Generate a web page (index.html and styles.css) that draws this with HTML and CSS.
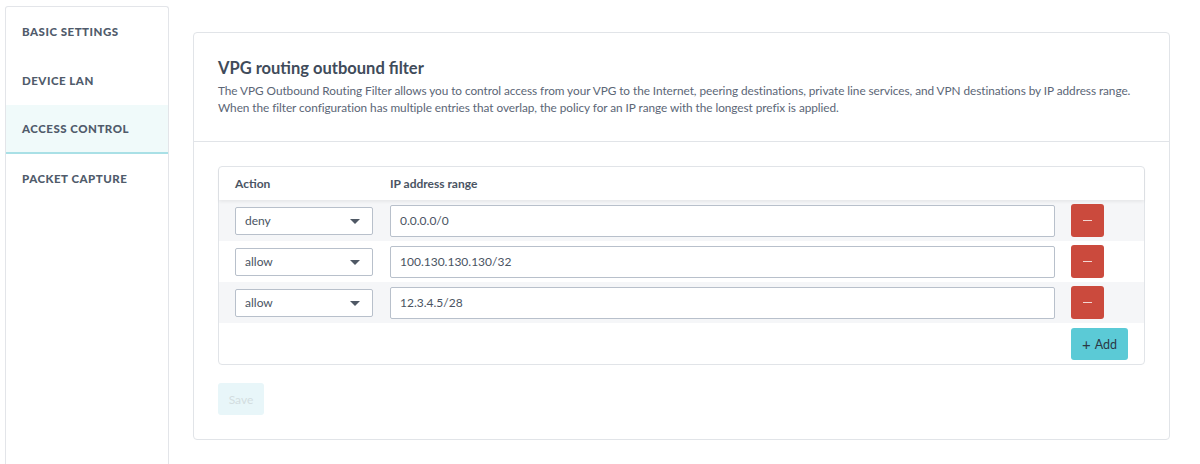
FILE: index.html
```html
<!DOCTYPE html>
<html>
<head>
    <title>Access Control</title>
    <link rel="stylesheet" href="styles.css">
</head>
<body>
    <div class="layout">
        <div class="sidebar">
            <div class="nav-item">BASIC SETTINGS</div>
            <div class="nav-item">DEVICE LAN</div>
            <div class="nav-item active">ACCESS CONTROL</div>
            <div class="nav-item">PACKET CAPTURE</div>
        </div>

        <div class="main">
            <div class="panel">
                <div class="panel-header">
                    <h2>VPG routing outbound filter</h2>
                    <p>The VPG Outbound Routing Filter allows you to control access from your VPG to the Internet, peering destinations, private line services, and VPN destinations by IP address range.<br>
                    When the filter configuration has multiple entries that overlap, the policy for an IP range with the longest prefix is applied.</p>
                </div>
                <div class="panel-body">
                    <div class="rules">
                        <div class="rule head">
                            <div class="col-action">Action</div>
                            <div class="col-range">IP address range</div>
                            <div class="col-btn"></div>
                        </div>
                        <div class="rule shaded">
                            <div class="col-action"><div class="select">deny<span class="caret"></span></div></div>
                            <div class="col-range"><div class="input">0.0.0.0/0</div></div>
                            <div class="col-btn"><button class="btn-remove"><span></span></button></div>
                        </div>
                        <div class="rule">
                            <div class="col-action"><div class="select">allow<span class="caret"></span></div></div>
                            <div class="col-range"><div class="input">100.130.130.130/32</div></div>
                            <div class="col-btn"><button class="btn-remove"><span></span></button></div>
                        </div>
                        <div class="rule shaded">
                            <div class="col-action"><div class="select">allow<span class="caret"></span></div></div>
                            <div class="col-range"><div class="input">12.3.4.5/28</div></div>
                            <div class="col-btn"><button class="btn-remove"><span></span></button></div>
                        </div>
                        <div class="rule foot">
                            <div class="col-action"></div>
                            <div class="col-range"></div>
                            <div class="col-btn"><button class="btn-add"><span class="plus">+</span>Add</button></div>
                        </div>
                    </div>
                    <button class="btn-save">Save</button>
                </div>
            </div>
        </div>
    </div>
</body>
</html>
```

FILE: styles.css
```css
* {
    margin: 0;
    padding: 0;
    box-sizing: border-box;
    font-family: Lato, "Open Sans", sans-serif;
}
body {
    background-color: #fff;
    color: #4a5463;
}
.layout {
    display: flex;
    height: 464px;
    padding: 6px 0 0 5px;
}
.sidebar {
    width: 164px;
    border: 1px solid #e3e5e9;
    border-bottom: none;
    border-radius: 3px 3px 0 0;
}
.nav-item {
    height: 49px;
    line-height: 49px;
    padding-left: 16px;
    font-size: 11.5px;
    font-weight: 900;
    letter-spacing: 0.5px;
    color: #505b6b;
}
.nav-item.active {
    background-color: #f0fafa;
    border-bottom: 2px solid #a9e0e6;
    line-height: 47px;
}
.main {
    flex: 1;
    padding: 26px 30px 0 24px;
}
.panel {
    border: 1px solid #e1e4e8;
    border-radius: 4px;
}
.panel-header {
    padding: 24px 24px 25px;
    border-bottom: 1px solid #e1e4e8;
}
.panel-header h2 {
    font-size: 16.5px;
    font-weight: 700;
    color: #404b5a;
    line-height: 22px;
    margin-bottom: 3px;
}
.panel-header p {
    font-size: 11.8px;
    letter-spacing: -0.05px;
    line-height: 17px;
    color: #5b6676;
    white-space: nowrap;
}
.panel-body {
    padding: 24px 24px 24px;
}
.rules {
    border: 1px solid #e1e4e8;
    border-radius: 4px;
}
.rule {
    display: flex;
    align-items: center;
    gap: 16px;
    padding: 0 16px;
    height: 41px;
}
.rule.head {
    height: 33px;
    font-size: 12px;
    font-weight: 700;
    color: #4a5463;
    box-shadow: 0 2px 3px rgba(0, 0, 0, 0.06);
    position: relative;
}
.rule.shaded {
    background-color: #f5f6f8;
}
.col-action {
    width: 138px;
    margin-right: 1px;
}
.col-range {
    flex: 1;
}
.col-btn {
    width: 57px;
}
.select {
    position: relative;
    height: 28px;
    line-height: 26px;
    border: 1px solid #b8c0cb;
    border-radius: 2px;
    background-color: #fff;
    padding-left: 9px;
    font-size: 12px;
    color: #4a5463;
}
.caret {
    position: absolute;
    right: 12px;
    top: 11px;
    border-left: 5px solid transparent;
    border-right: 5px solid transparent;
    border-top: 5px solid #4f5865;
}
.input {
    height: 32px;
    line-height: 30px;
    border: 1px solid #b8c0cb;
    border-radius: 2px;
    background-color: #fff;
    padding-left: 9px;
    font-size: 12px;
    color: #4a5463;
}
.btn-remove {
    display: flex;
    align-items: center;
    justify-content: center;
    width: 33px;
    height: 33px;
    border: none;
    border-radius: 3px;
    background-color: #cb4a3d;
}
.btn-remove span {
    width: 9px;
    height: 1.5px;
    background-color: #f3d6d2;
}
.btn-add {
    width: 57px;
    height: 32px;
    border: none;
    border-radius: 3px;
    background-color: #5bcad6;
    color: #2b3845;
    font-size: 12.5px;
}
.btn-add .plus {
    font-size: 15px;
    margin-right: 4px;
    vertical-align: -1px;
}
.btn-save {
    margin-top: 18px;
    width: 46px;
    height: 32px;
    border: none;
    border-radius: 3px;
    background-color: #e8f6f9;
    color: #d3dde0;
    font-size: 12px;
}
```
